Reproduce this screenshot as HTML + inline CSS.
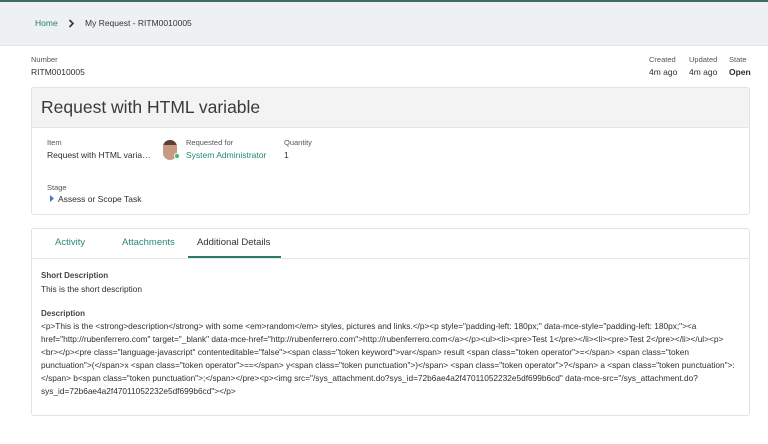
<!DOCTYPE html>
<html><head><style>
*{margin:0;padding:0;box-sizing:border-box}
body{width:768px;height:444px;background:#fff;font-family:"Liberation Sans",sans-serif;color:#2e2e2e;position:relative;overflow:hidden}
.a{position:absolute;white-space:nowrap}
.lbl{font-size:7.5px;color:#555}
.val{font-size:8.5px;color:#2e2e2e}
.grn{color:#1f7f6e}
.d{font-size:8.3px;color:#2e2e2e;left:41px}
</style></head><body>
<div class="a" style="left:0;top:0;width:768px;height:2px;background:#3a6e5a"></div>
<div class="a" style="left:0;top:2px;width:768px;height:44px;background:#eef1f2;border-bottom:1px solid #e2e6e7"></div>
<div class="a grn" style="left:35px;top:18px;font-size:8.5px;color:#2a7a6c">Home</div>
<svg class="a" style="left:68px;top:19px" width="7" height="9"><path d="M1.5 1l3.5 3.5-3.5 3.5" stroke="#333" stroke-width="1.6" fill="none"/></svg>
<div class="a" style="left:85px;top:18px;font-size:8.5px;color:#333">My Request - RITM0010005</div>
<div class="a lbl" style="left:31px;top:55px">Number</div>
<div class="a val" style="left:31px;top:67px">RITM0010005</div>
<div class="a lbl" style="left:649px;top:55px">Created</div>
<div class="a val" style="left:649px;top:67px">4m ago</div>
<div class="a lbl" style="left:689px;top:55px">Updated</div>
<div class="a val" style="left:689px;top:67px">4m ago</div>
<div class="a lbl" style="left:729px;top:55px">State</div>
<div class="a val" style="left:729px;top:67px;font-weight:bold">Open</div>

<div class="a" style="left:31px;top:87px;width:719px;height:128px;border:1px solid #e3e3e3;border-radius:3px;background:#fff"></div>
<div class="a" style="left:32px;top:88px;width:717px;height:40px;background:#f3f3f3;border-bottom:1px solid #e6e6e6"></div>
<div class="a" style="left:41px;top:97px;font-size:17.5px;color:#3a3a3a">Request with HTML variable</div>
<div class="a lbl" style="left:47px;top:138px">Item</div>
<div class="a val" style="left:47px;top:150px">Request with HTML varia…</div>
<div class="a" style="left:163px;top:140px;width:14px;height:20px;border-radius:7px;background:#c99a82;overflow:hidden"><div style="width:14px;height:5px;background:#5a4030"></div></div>
<div class="a" style="left:174px;top:153px;width:6px;height:6px;border-radius:3px;background:#2fbf71;border:1px solid #fff"></div>
<div class="a lbl" style="left:186px;top:138px">Requested for</div>
<div class="a val grn" style="left:186px;top:150px;color:#1f8a75">System Administrator</div>
<div class="a lbl" style="left:284px;top:138px">Quantity</div>
<div class="a val" style="left:284px;top:150px">1</div>
<div class="a lbl" style="left:47px;top:183px">Stage</div>
<svg class="a" style="left:50px;top:195px" width="5" height="7"><path d="M0 0L4 3.5 0 7z" fill="#3a7bd5"/></svg>
<div class="a val" style="left:58px;top:194px">Assess or Scope Task</div>

<div class="a" style="left:31px;top:228px;width:719px;height:188px;border:1px solid #e3e3e3;border-radius:3px"></div>
<div class="a" style="left:32px;top:258px;width:717px;height:1px;background:#e6e6e6"></div>
<div class="a" style="left:55px;top:237px;font-size:9.5px;color:#2a8a76">Activity</div>
<div class="a" style="left:122px;top:237px;font-size:9.5px;color:#2a8a76">Attachments</div>
<div class="a" style="left:197px;top:237px;font-size:9.5px;color:#333">Additional Details</div>
<div class="a" style="left:188px;top:256px;width:93px;height:2px;background:#2a7a6c"></div>

<div class="a" style="left:41px;top:271px;font-size:8px;font-weight:bold;color:#444">Short Description</div>
<div class="a val" style="left:41px;top:284px;font-size:8.3px">This is the short description</div>
<div class="a" style="left:41px;top:309px;font-size:8px;font-weight:bold;color:#444">Description</div>
<div class="a d" style="top:321px">&lt;p&gt;This is the &lt;strong&gt;description&lt;/strong&gt; with some &lt;em&gt;random&lt;/em&gt; styles, pictures and links.&lt;/p&gt;&lt;p style="padding-left: 180px;" data-mce-style="padding-left: 180px;"&gt;&lt;a</div>
<div class="a d" style="top:334px">href="http://rubenferrero.com" target="_blank" data-mce-href="http://rubenferrero.com"&gt;http://rubenferrero.com&lt;/a&gt;&lt;/p&gt;&lt;ul&gt;&lt;li&gt;&lt;pre&gt;Test 1&lt;/pre&gt;&lt;/li&gt;&lt;li&gt;&lt;pre&gt;Test 2&lt;/pre&gt;&lt;/li&gt;&lt;/ul&gt;&lt;p&gt;</div>
<div class="a d" style="top:347px">&lt;br&gt;&lt;/p&gt;&lt;pre class="language-javascript" contenteditable="false"&gt;&lt;span class="token keyword"&gt;var&lt;/span&gt; result &lt;span class="token operator"&gt;=&lt;/span&gt; &lt;span class="token</div>
<div class="a d" style="top:360px">punctuation"&gt;(&lt;/span&gt;x &lt;span class="token operator"&gt;==&lt;/span&gt; y&lt;span class="token punctuation"&gt;)&lt;/span&gt; &lt;span class="token operator"&gt;?&lt;/span&gt; a &lt;span class="token punctuation"&gt;:</div>
<div class="a d" style="top:373px">&lt;/span&gt; b&lt;span class="token punctuation"&gt;;&lt;/span&gt;&lt;/pre&gt;&lt;p&gt;&lt;img src="/sys_attachment.do?sys_id=72b6ae4a2f47011052232e5df699b6cd" data-mce-src="/sys_attachment.do?</div>
<div class="a d" style="top:386px">sys_id=72b6ae4a2f47011052232e5df699b6cd"&gt;&lt;/p&gt;</div>
</body></html>
